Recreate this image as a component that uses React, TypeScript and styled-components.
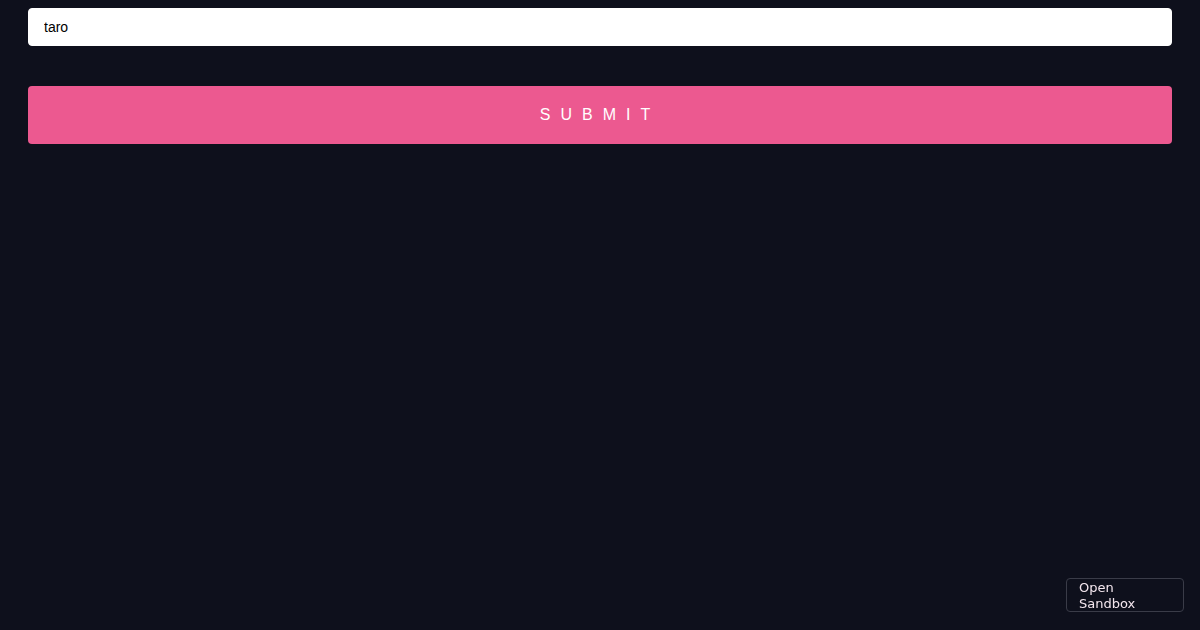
import React from 'react';
import styled, { createGlobalStyle } from 'styled-components';

const GlobalStyle = createGlobalStyle`
  html, body {
    margin: 0;
    padding: 0;
    background: #0e101c;
    font-family: "Liberation Sans", Arial, sans-serif;
  }
`;

const Form = styled.form`
  display: flex;
  flex-direction: column;
  padding: 8px 28px;
`;

const Input = styled.input`
  display: block;
  box-sizing: border-box;
  width: 100%;
  height: 38px;
  border: 1px solid #fff;
  border-radius: 4px;
  padding: 10px 15px;
  font-family: "Liberation Sans", Arial, sans-serif;
  font-size: 14px;
  color: #000;
  background: #fff;
  outline: none;
  margin-bottom: 40px;
`;

const SubmitButton = styled.button`
  display: block;
  box-sizing: border-box;
  width: 100%;
  height: 58px;
  border: none;
  border-radius: 4px;
  background: #ec5990;
  color: #fff;
  font-family: "Liberation Sans", Arial, sans-serif;
  font-size: 16px;
  text-transform: uppercase;
  letter-spacing: 10px;
  padding: 0;
  cursor: pointer;
`;

const SandboxLink = styled.button`
  position: fixed;
  right: 16px;
  bottom: 18px;
  box-sizing: border-box;
  width: 118px;
  height: 34px;
  padding: 1px 12px 0;
  text-align: left;
  background: transparent;
  border: 1px solid #3a3c48;
  border-radius: 4px;
  color: #f3e6ee;
  font-family: "DejaVu Sans", sans-serif;
  font-size: 13px;
  line-height: 16px;
`;

export default function App() {
  return (
    <>
      <GlobalStyle />
      <Form onSubmit={(e) => e.preventDefault()}>
        <Input defaultValue="taro" />
        <SubmitButton type="submit">Submit</SubmitButton>
      </Form>
      <SandboxLink type="button">
        Open
        <br />
        Sandbox
      </SandboxLink>
    </>
  );
}
